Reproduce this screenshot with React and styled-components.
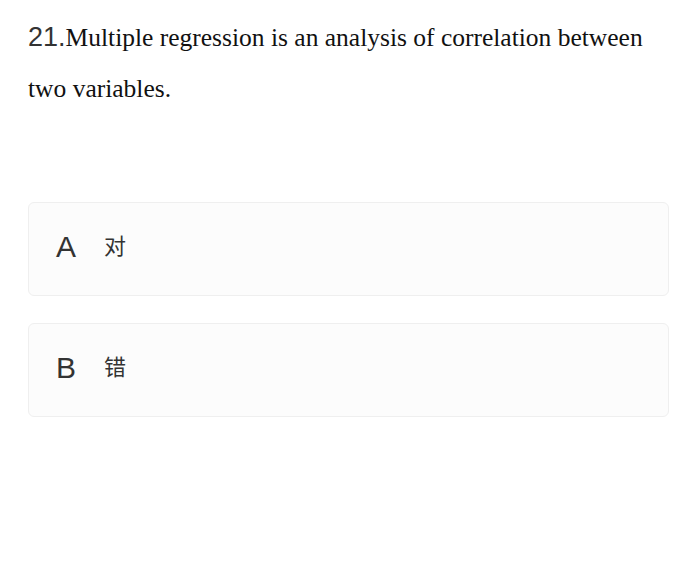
import React from 'react';
import styled, { createGlobalStyle } from 'styled-components';

const GlobalStyle = createGlobalStyle`
  body {
    margin: 0;
    background: #fff;
  }
`;

const Page = styled.div`
  width: 700px;
  height: 574px;
  padding: 12px 31px 0 28px;
  box-sizing: border-box;
  background: #fff;
`;

const Question = styled.div`
  font-family: "Liberation Serif", "Times New Roman", serif;
  font-size: 25.5px;
  line-height: 51px;
  color: #111;
`;

const Num = styled.span`
  font-family: "Liberation Sans", Arial, sans-serif;
  font-size: 27px;
  color: #333;
`;

const Options = styled.div`
  display: flex;
  flex-direction: column;
  gap: 27px;
  margin-top: 88px;
`;

const Option = styled.div`
  height: 94px;
  box-sizing: border-box;
  display: flex;
  align-items: center;
  padding: 0 0 4px 27px;
  background: #fcfcfc;
  border: 1px solid #efefef;
  border-radius: 6px;
`;

const Letter = styled.span`
  width: 48px;
  font-family: "Liberation Sans", Arial, sans-serif;
  font-size: 30px;
  color: #333;
`;

const Label = styled.span`
  font-family: "Noto Sans CJK SC", sans-serif;
  font-size: 22px;
  color: #333;
  margin-top: -6px;
`;

const options = [
  { key: 'A', text: '对' },
  { key: 'B', text: '错' },
];

export default function App() {
  return (
    <Page>
      <GlobalStyle />
      <Question>
        <Num>21.</Num>Multiple regression is an analysis of correlation between two variables.
      </Question>
      <Options>
        {options.map((o) => (
          <Option key={o.key}>
            <Letter>{o.key}</Letter>
            <Label>{o.text}</Label>
          </Option>
        ))}
      </Options>
    </Page>
  );
}
